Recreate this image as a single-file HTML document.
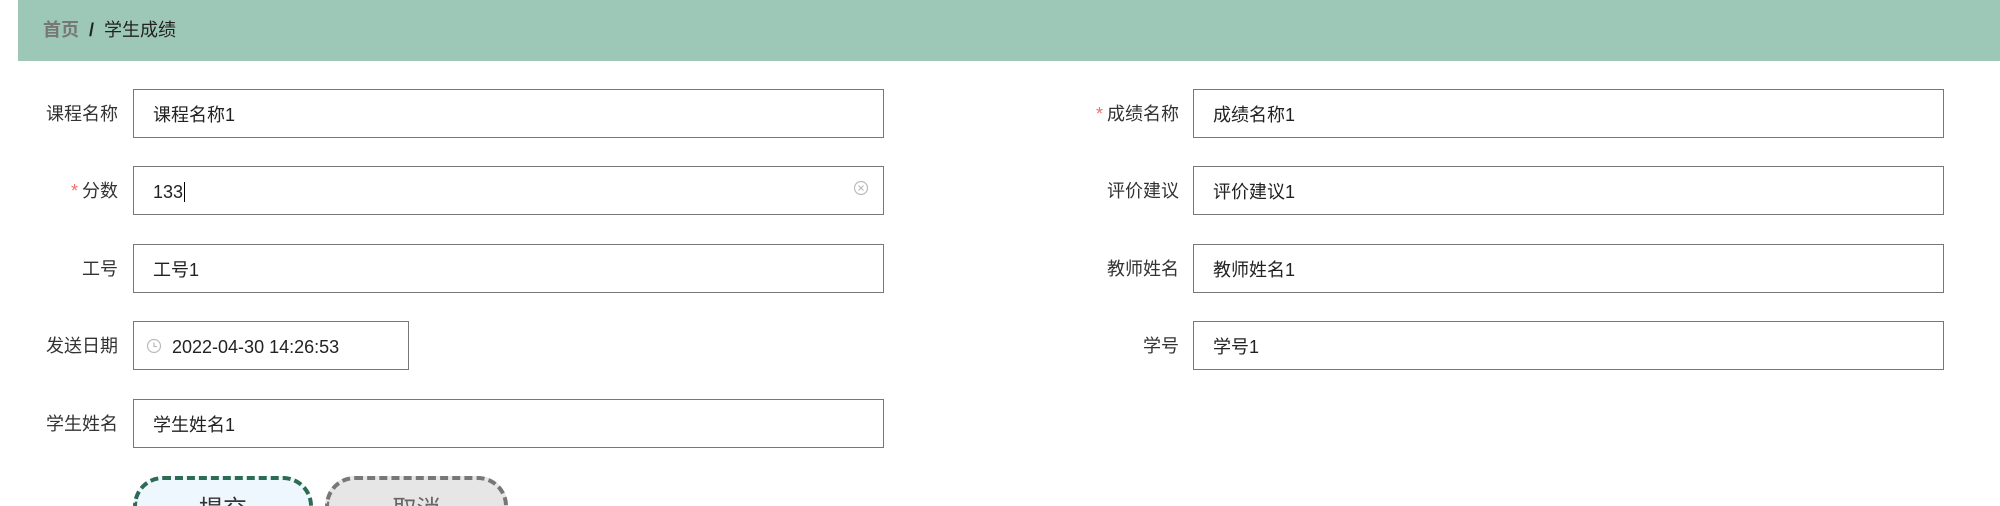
<!DOCTYPE html>
<html style="height:506px;overflow:hidden"><head><meta charset="utf-8"><style>
body{margin:0;width:2000px;height:506px;overflow:hidden;background:#fff;font-family:"Liberation Sans","Noto Sans CJK SC",sans-serif;position:relative}
.hd{position:absolute;left:18px;top:0;width:1982px;height:61px;background:#9dc8b7}
.bc{position:absolute;left:43px;top:19px;font-size:18px;color:#222;line-height:22px}
.bc b{color:#777}
.lab{position:absolute;width:200px;text-align:right;font-size:18px;color:#333;line-height:22px}
.lab i{color:#f56c6c;font-style:normal;margin-right:4px}
.in{position:absolute;height:47px;border:1px solid #777;box-sizing:content-box;font-size:18px;color:#222;line-height:50px;padding-left:19px}
.btn{position:absolute;top:476px;height:30px;border:4px dashed;border-bottom:none;border-radius:36px 36px 0 0;box-sizing:border-box;font-size:24px;text-align:center;padding-top:16px;overflow:hidden;line-height:28px}
</style></head><body>
<div class="hd"></div>
<div class="bc"><b>首页</b>&nbsp;&nbsp;<span style="font-weight:bold">/</span>&nbsp;&nbsp;学生成绩</div>

<div class="lab" style="left:-82px;top:103px">课程名称</div>
<div class="in" style="left:133px;top:89px;width:730px">课程名称1</div>
<div class="lab" style="left:-82px;top:180px"><i>*</i>分数</div>
<div class="in" style="left:133px;top:166px;width:730px">133<span style="border-left:1px solid #000;margin-left:1px"></span></div>
<svg style="position:absolute;left:853px;top:180px" width="16" height="16" viewBox="0 0 16 16"><circle cx="8" cy="8" r="6.5" fill="none" stroke="#bbb" stroke-width="1.2"/><path d="M5.5 5.5L10.5 10.5M10.5 5.5L5.5 10.5" stroke="#bbb" stroke-width="1.2"/></svg>
<div class="lab" style="left:-82px;top:258px">工号</div>
<div class="in" style="left:133px;top:244px;width:730px">工号1</div>
<div class="lab" style="left:-82px;top:335px">发送日期</div>
<div class="in" style="left:133px;top:321px;padding-left:38px;width:236px">2022-04-30 14:26:53</div>
<svg style="position:absolute;left:146px;top:338px" width="16" height="16" viewBox="0 0 16 16"><circle cx="8" cy="8" r="6.5" fill="none" stroke="#bbb" stroke-width="1.2"/><path d="M8 4.5V8.5H11" fill="none" stroke="#bbb" stroke-width="1.2"/></svg>
<div class="lab" style="left:-82px;top:413px">学生姓名</div>
<div class="in" style="left:133px;top:399px;width:730px">学生姓名1</div>

<div class="lab" style="left:979px;top:103px"><i>*</i>成绩名称</div>
<div class="in" style="left:1193px;top:89px;width:730px">成绩名称1</div>
<div class="lab" style="left:979px;top:180px">评价建议</div>
<div class="in" style="left:1193px;top:166px;width:730px">评价建议1</div>
<div class="lab" style="left:979px;top:258px">教师姓名</div>
<div class="in" style="left:1193px;top:244px;width:730px">教师姓名1</div>
<div class="lab" style="left:979px;top:335px">学号</div>
<div class="in" style="left:1193px;top:321px;width:730px">学号1</div>

<div class="btn" style="left:133px;width:180px;background:#eef7fd;border-color:#2e6b55;color:#333">提交</div>
<div class="btn" style="left:325px;width:183px;background:#e6e6e6;border-color:#777;color:#666">取消</div>
</body></html>
